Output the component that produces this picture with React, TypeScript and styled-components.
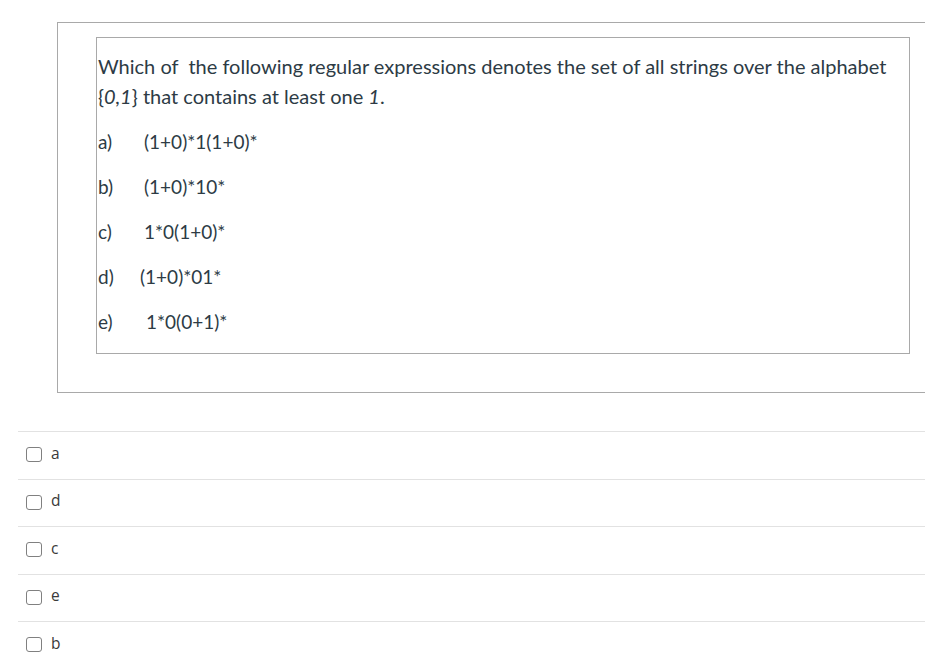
import React from "react";
import styled, { createGlobalStyle } from "styled-components";

const Global = createGlobalStyle`
  html, body { margin: 0; padding: 0; background: #fff; }
  body { font-family: Lato, "Open Sans", sans-serif; color: #2d3b45; overflow: hidden; }
`;

const Page = styled.div`
  width: 925px;
  height: 671px;
  overflow: hidden;
  padding-top: 22px;
  box-sizing: border-box;
`;

const QuestionFrame = styled.div`
  margin-left: 57px;
  width: 900px;
  height: 371px;
  box-sizing: border-box;
  border: 1px solid #a9a9a9;
  border-right: none;
  padding: 14px 0 0 38px;
`;

const QuestionBox = styled.div`
  width: 814px;
  height: 317px;
  box-sizing: border-box;
  border: 1px solid #a9a9a9;
  padding: 13px 0 0 1px;
`;

const Prompt = styled.p`
  margin: 0;
  font-size: 20px;
  line-height: 30px;
  color: #2d3b45;
  white-space: nowrap;
`;

const OptionList = styled.div`
  display: flex;
  flex-direction: column;
  margin-top: 20px;
`;

const Option = styled.div`
  display: flex;
  height: 45px;
  font-size: 19px;
  line-height: 22px;
  color: #2d3b45;
`;

const OptLetter = styled.span<{ $w: number }>`
  width: ${(p) => p.$w}px;
  flex: none;
`;

const Answers = styled.div`
  margin-top: 38px;
  display: flex;
  flex-direction: column;
`;

const AnswerRow = styled.label`
  display: flex;
  align-items: center;
  gap: 9px;
  height: 47.5px;
  box-sizing: border-box;
  margin-left: 18px;
  border-top: 1px solid #e2e2e2;
  padding-left: 8px;
  padding-bottom: 5px;
  font-family: "Open Sans", sans-serif;
  font-size: 15.5px;
  color: #3a3a3a;
`;

const Box = styled.span`
  width: 14px;
  height: 13px;
  border: 1px solid #808080;
  border-radius: 3px;
  flex: none;
  margin-top: 4px;
`;

const options: [string, number, string][] = [
  ["a)", 46, "(1+0)*1(1+0)*"],
  ["b)", 46, "(1+0)*10*"],
  ["c)", 46, "1*0(1+0)*"],
  ["d)", 42, "(1+0)*01*"],
  ["e)", 48, "1*0(0+1)*"],
];

export default function App() {
  return (
    <Page>
      <Global />
      <QuestionFrame>
        <QuestionBox>
          <Prompt>
            Which of&nbsp; the following regular expressions denotes the set of all strings over the alphabet
            <br />
            {"{"}
            <i>0,1</i>
            {"}"} that contains at least one <i>1</i>.
          </Prompt>
          <OptionList>
            {options.map(([l, w, e]) => (
              <Option key={l}>
                <OptLetter $w={w}>{l}</OptLetter>
                <span>{e}</span>
              </Option>
            ))}
          </OptionList>
        </QuestionBox>
      </QuestionFrame>
      <Answers>
        {["a", "d", "c", "e", "b"].map((a) => (
          <AnswerRow key={a}>
            <Box />
            <span>{a}</span>
          </AnswerRow>
        ))}
      </Answers>
    </Page>
  );
}
